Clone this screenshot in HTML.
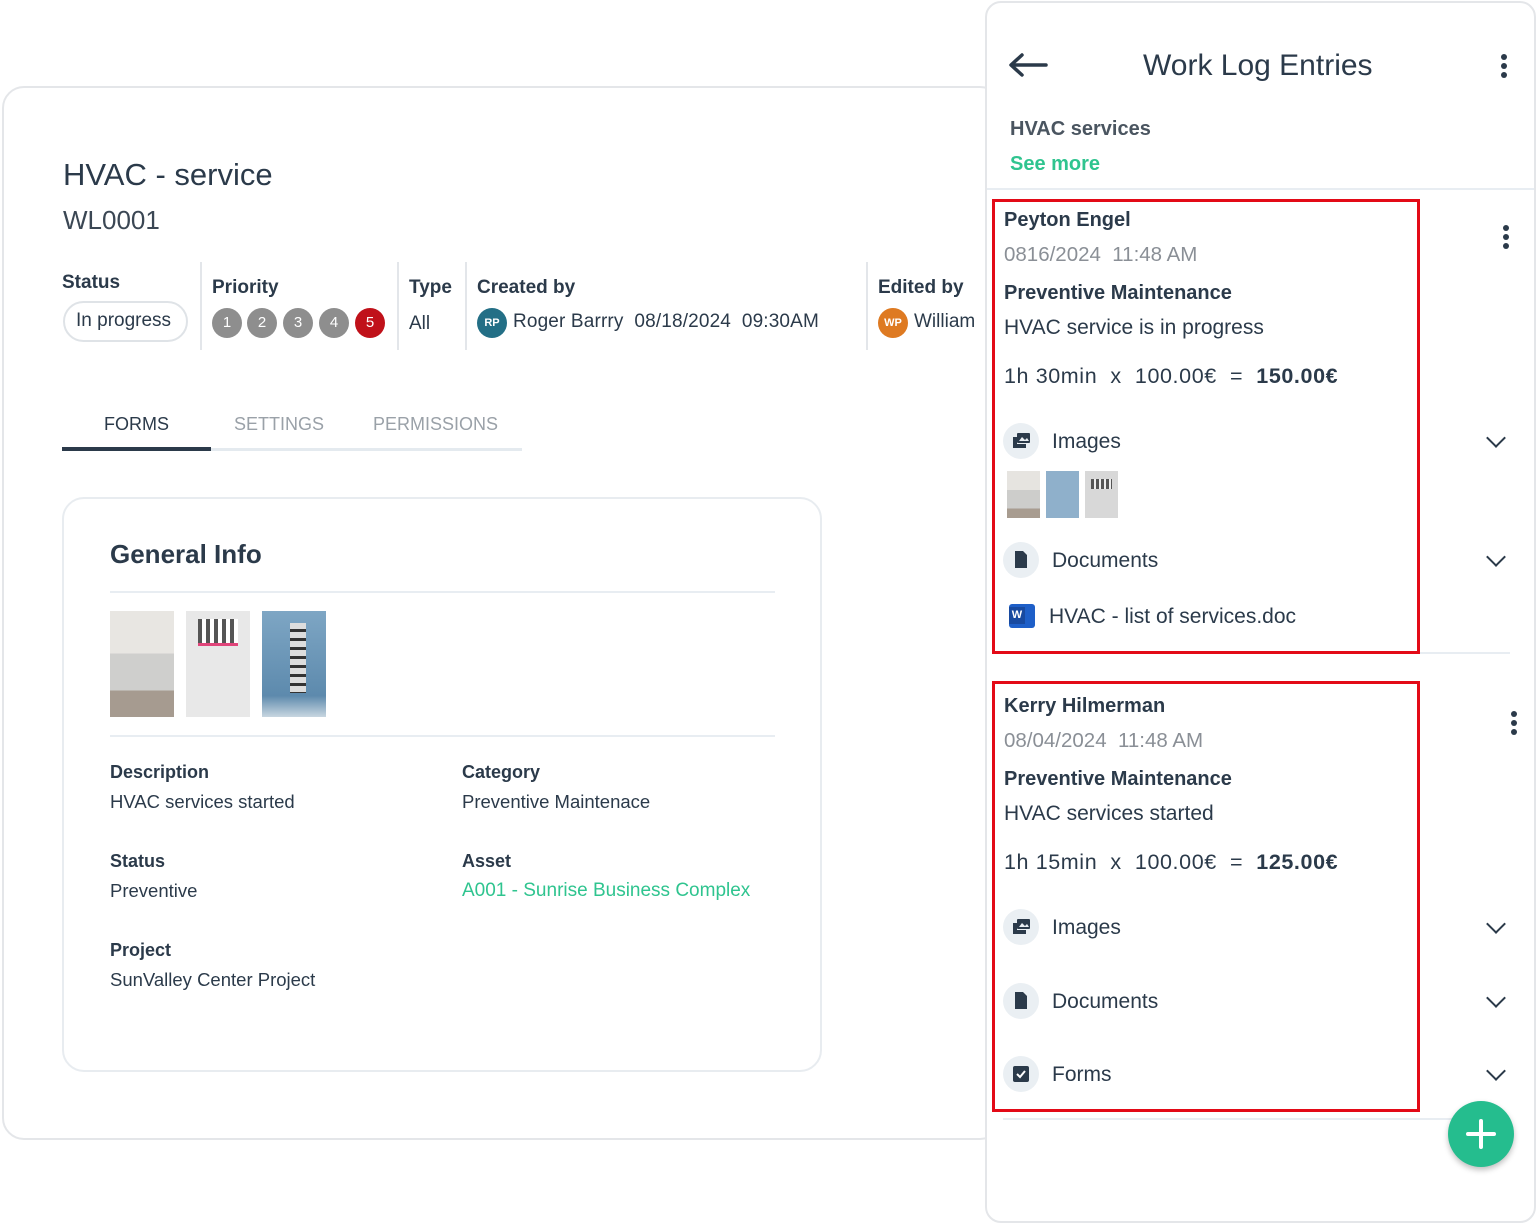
<!DOCTYPE html>
<html><head><meta charset="utf-8"><style>
*{margin:0;padding:0;box-sizing:border-box}
body{width:1536px;height:1225px;background:#fff;position:relative;overflow:hidden;font-family:"Liberation Sans",sans-serif;color:#2b3a4a}
.t{position:absolute;white-space:nowrap;line-height:30px}
.n{font-family:"Liberation Sans Narrow","Liberation Sans",sans-serif}
.b{font-weight:bold}
.g{color:#8a8f96}
.gr{color:#2fc48f}
.pc{position:absolute;width:30px;height:30px;border-radius:50%;background:#8e8e8e;color:#fff;font-size:15px;text-align:center;line-height:30px}
.vl{position:absolute;width:2px;background:#e3e6ea}
.hl{position:absolute;height:2px;background:#e8edf2}
.ic{position:absolute;width:36px;height:36px;border-radius:50%;background:#eaeff3}
.chev{position:absolute;width:14px;height:14px;border-right:2.5px solid #2b3a4a;border-bottom:2.5px solid #2b3a4a;transform:rotate(45deg)}
.dots{position:absolute;width:6px}
.dots i{display:block;width:6px;height:6px;border-radius:50%;background:#2b3a4a;margin-bottom:3px}
.red{position:absolute;border:3px solid #e30a17}
</style></head><body>
<div style="position:absolute;left:2px;top:86px;width:1000px;height:1054px;border:2px solid #e4e6e9;border-radius:22px"></div>
<div class="t" style="left:63px;top:159px;font-size:31px;line-height:32px">HVAC - service</div>
<div class="t" style="left:63px;top:205px;font-size:26px;color:#3b4754">WL0001</div>

<div class="t n b" style="left:62px;top:268px;font-size:19px">Status</div>
<div style="position:absolute;left:63px;top:301px;width:125px;height:41px;border:2px solid #dfe3e7;border-radius:21px"></div>
<div class="t n" style="left:76px;top:306px;font-size:19px">In progress</div>
<div class="vl" style="left:200px;top:262px;height:88px"></div>
<div class="t n b" style="left:212px;top:273px;font-size:19px">Priority</div>
<div class="pc" style="left:212px;top:308px">1</div>
<div class="pc" style="left:247px;top:308px">2</div>
<div class="pc" style="left:283px;top:308px">3</div>
<div class="pc" style="left:319px;top:308px">4</div>
<div class="pc" style="left:355px;top:308px;background:#c0111a">5</div>
<div class="vl" style="left:397px;top:262px;height:88px"></div>
<div class="t n b" style="left:409px;top:273px;font-size:19px">Type</div>
<div class="t n" style="left:409px;top:309px;font-size:19px">All</div>
<div class="vl" style="left:465px;top:262px;height:88px"></div>
<div class="t n b" style="left:477px;top:273px;font-size:19px">Created by</div>
<div class="pc" style="left:477px;top:308px;background:#236f86;font-size:11px;font-weight:bold">RP</div>
<div class="t n" style="left:513px;top:307px;font-size:19px;letter-spacing:0.15px">Roger Barrry&nbsp; 08/18/2024&nbsp; 09:30AM</div>
<div class="vl" style="left:866px;top:262px;height:88px"></div>
<div class="t n b" style="left:878px;top:273px;font-size:19px">Edited by</div>
<div class="pc" style="left:878px;top:308px;background:#de7a22;font-size:11px;font-weight:bold">WP</div>
<div class="t n" style="left:914px;top:307px;font-size:19px">William</div>

<div class="t n" style="left:104px;top:409px;font-size:18px">FORMS</div>
<div class="t n" style="left:234px;top:409px;font-size:18px;color:#9aa1a8">SETTINGS</div>
<div class="t n" style="left:373px;top:409px;font-size:18px;color:#9aa1a8">PERMISSIONS</div>
<div style="position:absolute;left:62px;top:448px;width:460px;height:3px;background:#e4eaef"></div>
<div style="position:absolute;left:62px;top:447px;width:149px;height:4px;background:#2b3a4a"></div>

<div style="position:absolute;left:62px;top:497px;width:760px;height:575px;border:2px solid #e8ecf0;border-radius:22px"></div>
<div class="t b" style="left:110px;top:539px;font-size:26px">General Info</div>
<div class="hl" style="left:110px;top:591px;width:665px"></div>
<div style="position:absolute;left:110px;top:611px;width:64px;height:106px;background:linear-gradient(#e8e6e2 0 40%,#cfcfcd 40% 75%,#a69b90 75%)"></div>
<div style="position:absolute;left:186px;top:611px;width:64px;height:106px;background:#e8e8e8"><div style="margin:8px 0 0 12px;width:40px;height:24px;background:repeating-linear-gradient(90deg,#555 0 4px,#fff 4px 8px)"></div><div style="margin-left:12px;width:40px;height:3px;background:#e0457a"></div></div>
<div style="position:absolute;left:262px;top:611px;width:64px;height:106px;background:linear-gradient(#7ea6c4,#5d8aad 80%,#c7d6e0)"><div style="margin:12px 0 0 28px;width:16px;height:70px;background:repeating-linear-gradient(#ddd 0 6px,#333 6px 9px)"></div></div>
<div class="hl" style="left:110px;top:735px;width:665px"></div>

<div class="t n b" style="left:110px;top:757px;font-size:18px">Description</div>
<div class="t n" style="left:110px;top:787px;font-size:18.5px">HVAC services started</div>
<div class="t n b" style="left:462px;top:757px;font-size:18px">Category</div>
<div class="t n" style="left:462px;top:787px;font-size:18.5px">Preventive Maintenace</div>
<div class="t n b" style="left:110px;top:846px;font-size:18px">Status</div>
<div class="t n" style="left:110px;top:876px;font-size:18.5px">Preventive</div>
<div class="t n b" style="left:462px;top:846px;font-size:18px">Asset</div>
<div class="t n gr" style="left:462px;top:876px;font-size:19px">A001 - Sunrise Business Complex</div>
<div class="t n b" style="left:110px;top:935px;font-size:18px">Project</div>
<div class="t n" style="left:110px;top:965px;font-size:18.5px">SunValley Center Project</div>

<div style="position:absolute;left:985px;top:1px;width:551px;height:1222px;background:#fff;border:2px solid #e4e6e9;border-radius:16px"></div>
<svg style="position:absolute;left:1008px;top:52px" width="40" height="26" viewBox="0 0 40 26"><path d="M38 13H4M14 3L3 13l11 10" fill="none" stroke="#2b3a4a" stroke-width="3.5" stroke-linecap="round" stroke-linejoin="round"/></svg>
<div class="t" style="left:1143px;top:51px;font-size:30px">Work Log Entries</div>
<div class="dots" style="left:1501px;top:54px"><i></i><i></i><i></i></div>
<div class="t b" style="left:1010px;top:114px;font-size:20px;color:#4a5560">HVAC services</div>
<div class="t b gr" style="left:1010px;top:149px;font-size:20px">See more</div>
<div class="hl" style="left:987px;top:188px;width:547px"></div>

<div class="red" style="left:992px;top:199px;width:428px;height:455px"></div>
<div class="t b" style="left:1004px;top:205px;font-size:20px">Peyton Engel</div>
<div class="dots" style="left:1503px;top:225px"><i></i><i></i><i></i></div>
<div class="t g" style="left:1004px;top:240px;font-size:20.5px">0816/2024&nbsp; 11:48 AM</div>
<div class="t b" style="left:1004px;top:278px;font-size:20px">Preventive Maintenance</div>
<div class="t" style="left:1004px;top:313px;font-size:21px">HVAC service is in progress</div>
<div class="t" style="left:1004px;top:361px;font-size:21.5px;letter-spacing:0.6px">1h 30min&nbsp; x&nbsp; 100.00€&nbsp; =&nbsp; <b>150.00€</b></div>
<div class="ic" style="left:1003px;top:423px"></div>
<svg style="position:absolute;left:1012px;top:432px" width="19" height="17" viewBox="0 0 19 17"><rect x="5" y="1" width="13" height="10" rx="1" fill="#2b3a4a"/><path d="M7 9l3-4 3 3 2-2 2 3z" fill="#eaeff3"/><rect x="1" y="5" width="4" height="11" fill="#2b3a4a"/><rect x="5" y="12" width="9" height="4" fill="#2b3a4a"/></svg>
<div class="t" style="left:1052px;top:427px;font-size:21px">Images</div>
<div class="chev" style="left:1489px;top:431px"></div>
<div style="position:absolute;left:1007px;top:471px;width:33px;height:47px;background:linear-gradient(#e6e4e0 0 40%,#cdcdcb 40% 80%,#a89c90 80%)"></div>
<div style="position:absolute;left:1046px;top:471px;width:33px;height:47px;background:#8fb0cb"></div>
<div style="position:absolute;left:1085px;top:471px;width:33px;height:47px;background:#d8d8d8"><div style="margin:8px 0 0 6px;width:21px;height:10px;background:repeating-linear-gradient(90deg,#555 0 3px,#eee 3px 5px)"></div></div>
<div class="ic" style="left:1003px;top:542px"></div>
<svg style="position:absolute;left:1014px;top:550px" width="14" height="19" viewBox="0 0 14 19"><path d="M1 1h8l4 4v13H1z" fill="#2b3a4a"/></svg>
<div class="t" style="left:1052px;top:546px;font-size:21px">Documents</div>
<div class="chev" style="left:1489px;top:550px"></div>
<div style="position:absolute;left:1009px;top:604px;width:26px;height:24px;background:#1e5fc8;border-radius:3px"></div>
<div style="position:absolute;left:1009px;top:607px;width:16px;height:17px;background:#184aa0;color:#fff;font-size:11px;font-weight:bold;text-align:center;line-height:17px">W</div>
<div class="t" style="left:1049px;top:602px;font-size:21px">HVAC - list of services.doc</div>
<div class="hl" style="left:1420px;top:652px;width:90px"></div>

<div class="red" style="left:992px;top:681px;width:428px;height:431px"></div>
<div class="t b" style="left:1004px;top:691px;font-size:20px">Kerry Hilmerman</div>
<div class="dots" style="left:1511px;top:711px"><i></i><i></i><i></i></div>
<div class="t g" style="left:1004px;top:726px;font-size:20.5px">08/04/2024&nbsp; 11:48 AM</div>
<div class="t b" style="left:1004px;top:764px;font-size:20px">Preventive Maintenance</div>
<div class="t" style="left:1004px;top:799px;font-size:21px">HVAC services started</div>
<div class="t" style="left:1004px;top:847px;font-size:21.5px;letter-spacing:0.6px">1h 15min&nbsp; x&nbsp; 100.00€&nbsp; =&nbsp; <b>125.00€</b></div>
<div class="ic" style="left:1003px;top:909px"></div>
<svg style="position:absolute;left:1012px;top:918px" width="19" height="17" viewBox="0 0 19 17"><rect x="5" y="1" width="13" height="10" rx="1" fill="#2b3a4a"/><path d="M7 9l3-4 3 3 2-2 2 3z" fill="#eaeff3"/><rect x="1" y="5" width="4" height="11" fill="#2b3a4a"/><rect x="5" y="12" width="9" height="4" fill="#2b3a4a"/></svg>
<div class="t" style="left:1052px;top:913px;font-size:21px">Images</div>
<div class="chev" style="left:1489px;top:917px"></div>
<div class="ic" style="left:1003px;top:983px"></div>
<svg style="position:absolute;left:1014px;top:991px" width="14" height="19" viewBox="0 0 14 19"><path d="M1 1h8l4 4v13H1z" fill="#2b3a4a"/></svg>
<div class="t" style="left:1052px;top:987px;font-size:21px">Documents</div>
<div class="chev" style="left:1489px;top:991px"></div>
<div class="ic" style="left:1003px;top:1056px"></div>
<svg style="position:absolute;left:1013px;top:1066px" width="16" height="16" viewBox="0 0 16 16"><rect x="0" y="0" width="16" height="16" rx="2" fill="#2b3a4a"/><path d="M4 8l3 3 5-6" fill="none" stroke="#fff" stroke-width="2"/></svg>
<div class="t" style="left:1052px;top:1060px;font-size:21px">Forms</div>
<div class="chev" style="left:1489px;top:1064px"></div>
<div class="hl" style="left:1003px;top:1118px;width:507px"></div>
<div style="position:absolute;left:1448px;top:1101px;width:66px;height:66px;border-radius:50%;background:#25bd8e;box-shadow:0 3px 6px rgba(0,0,0,.25)"></div>
<svg style="position:absolute;left:1466px;top:1119px" width="30" height="30" viewBox="0 0 30 30"><path d="M15 2v26M2 15h26" stroke="#fff" stroke-width="4" stroke-linecap="round"/></svg>
</body></html>
